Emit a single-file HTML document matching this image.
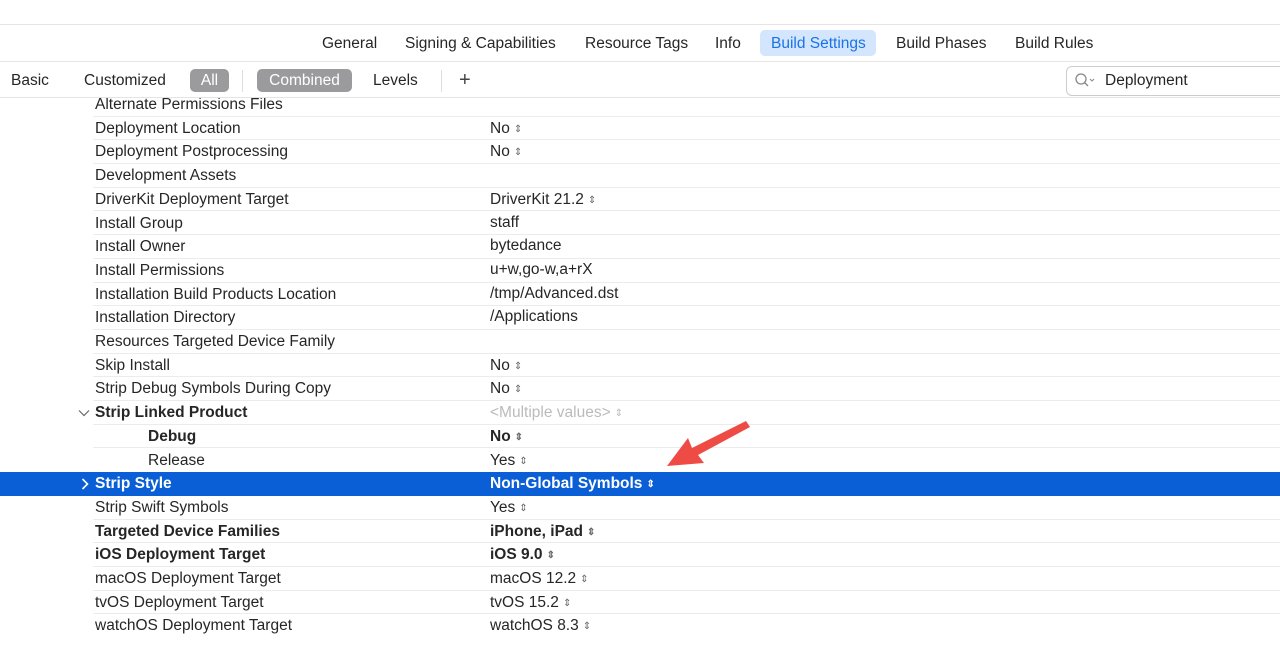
<!DOCTYPE html><html><head><style>
body{margin:0;width:1280px;height:655px;overflow:hidden;background:#fff;font-family:"Liberation Sans",sans-serif;font-size:15.5px;color:#262626;position:relative}
.a{position:absolute;white-space:nowrap}
.hl{position:absolute;left:0;width:1280px;height:1px;background:#e4e4e4}
.row{position:absolute;left:0;width:1280px;height:23.7px;line-height:23.7px}
.row .k{position:absolute;left:95px}
.row .v{position:absolute;left:490px}
.row .ln{position:absolute;left:93px;right:0;bottom:0;height:1px;background:#ececec}
b{font-weight:bold}
.c{font-size:10px;color:#666;margin-left:4px;position:relative;top:-1px}
.sel{background:#0a5fd6;color:#fff}
.sel .c{color:#fff}
</style></head><body>
<div class="hl" style="top:24px"></div>
<div class="hl" style="top:61px"></div>
<div class="a" style="left:322px;top:35px">General</div>
<div class="a" style="left:405px;top:35px">Signing &amp; Capabilities</div>
<div class="a" style="left:585px;top:35px">Resource Tags</div>
<div class="a" style="left:715px;top:35px">Info</div>
<div class="a" style="left:760px;top:30px;width:116px;height:26px;background:#d3e6fd;border-radius:5px"></div>
<div class="a" style="left:771px;top:35px;color:#1a73e8">Build Settings</div>
<div class="a" style="left:896px;top:35px">Build Phases</div>
<div class="a" style="left:1015px;top:35px">Build Rules</div>

<div class="a" style="left:11px;top:72px">Basic</div>
<div class="a" style="left:84px;top:72px">Customized</div>
<div class="a" style="left:190px;top:69px;width:39px;height:23px;background:#9b9b9d;border-radius:5px;color:#fff;text-align:center;line-height:23px">All</div>
<div class="a" style="left:242px;top:70px;width:1px;height:22px;background:#ddd"></div>
<div class="a" style="left:257px;top:69px;width:95px;height:23px;background:#9b9b9d;border-radius:5px;color:#fff;text-align:center;line-height:23px">Combined</div>
<div class="a" style="left:373px;top:72px">Levels</div>
<div class="a" style="left:441px;top:70px;width:1px;height:22px;background:#ddd"></div>
<div class="a" style="left:459px;top:69px;font-size:20px;color:#444">+</div>
<div class="a" style="left:1066px;top:66px;width:230px;height:28px;border:1px solid #ccc;border-radius:6px"></div>
<svg class="a" style="left:1074px;top:72px" width="22" height="16"><circle cx="7" cy="7" r="5" fill="none" stroke="#888" stroke-width="1.3"/><line x1="10.5" y1="10.5" x2="14" y2="14" stroke="#888" stroke-width="1.3"/><path d="M16 7l2 2 2-2" fill="none" stroke="#888"/></svg>
<div class="a" style="left:1105px;top:72px">Deployment</div>
<div class="hl" style="top:97px"></div>

<div style="position:absolute;top:98px;left:0;width:1280px;height:557px;overflow:hidden">
<div style="position:absolute;top:-5px;left:0">
<div class="row" style="top:0"><span class="k">Alternate Permissions Files</span><div class="ln"></div></div>
<div class="row" style="top:23.7px"><span class="k">Deployment Location</span><span class="v">No<span class="c">⇕</span></span><div class="ln"></div></div>
<div class="row" style="top:47.4px"><span class="k">Deployment Postprocessing</span><span class="v">No<span class="c">⇕</span></span><div class="ln"></div></div>
<div class="row" style="top:71.1px"><span class="k">Development Assets</span><div class="ln"></div></div>
<div class="row" style="top:94.8px"><span class="k">DriverKit Deployment Target</span><span class="v">DriverKit 21.2<span class="c">⇕</span></span><div class="ln"></div></div>
<div class="row" style="top:118.5px"><span class="k">Install Group</span><span class="v" style="top:-1px">staff</span><div class="ln"></div></div>
<div class="row" style="top:142.2px"><span class="k">Install Owner</span><span class="v" style="top:-1px">bytedance</span><div class="ln"></div></div>
<div class="row" style="top:165.9px"><span class="k">Install Permissions</span><span class="v" style="top:-1px">u+w,go-w,a+rX</span><div class="ln"></div></div>
<div class="row" style="top:189.6px"><span class="k">Installation Build Products Location</span><span class="v" style="top:-1px">/tmp/Advanced.dst</span><div class="ln"></div></div>
<div class="row" style="top:213.3px"><span class="k">Installation Directory</span><span class="v" style="top:-1px">/Applications</span><div class="ln"></div></div>
<div class="row" style="top:237px"><span class="k">Resources Targeted Device Family</span><div class="ln"></div></div>
<div class="row" style="top:260.7px"><span class="k">Skip Install</span><span class="v">No<span class="c">⇕</span></span><div class="ln"></div></div>
<div class="row" style="top:284.4px"><span class="k">Strip Debug Symbols During Copy</span><span class="v">No<span class="c">⇕</span></span><div class="ln"></div></div>
<div class="row" style="top:308.1px"><svg class="a" style="left:78px;top:8px" width="12" height="8"><path d="M1 1.5l5 5 5-5" fill="none" stroke="#666" stroke-width="1.2"/></svg><b class="k">Strip Linked Product</b><span class="v" style="color:#bbb">&lt;Multiple values&gt;<span class="c" style="color:#bbb">⇕</span></span><div class="ln"></div></div>
<div class="row" style="top:331.8px"><b class="k" style="left:148px">Debug</b><b class="v">No<span class="c">⇕</span></b><div class="ln"></div></div>
<div class="row" style="top:355.5px"><span class="k" style="left:148px">Release</span><span class="v">Yes<span class="c">⇕</span></span></div>
<div class="row sel" style="top:379.2px"><svg class="a" style="left:81px;top:6px" width="8" height="12"><path d="M1.5 1l5 5-5 5" fill="none" stroke="#fff" stroke-width="1.6"/></svg><b class="k">Strip Style</b><b class="v">Non-Global Symbols<span class="c">⇕</span></b></div>
<div class="row" style="top:402.9px"><span class="k">Strip Swift Symbols</span><span class="v">Yes<span class="c">⇕</span></span><div class="ln"></div></div>
<div class="row" style="top:426.6px"><b class="k">Targeted Device Families</b><b class="v">iPhone, iPad<span class="c">⇕</span></b><div class="ln"></div></div>
<div class="row" style="top:450.3px"><b class="k">iOS Deployment Target</b><b class="v">iOS 9.0<span class="c">⇕</span></b><div class="ln"></div></div>
<div class="row" style="top:474px"><span class="k">macOS Deployment Target</span><span class="v">macOS 12.2<span class="c">⇕</span></span><div class="ln"></div></div>
<div class="row" style="top:497.7px"><span class="k">tvOS Deployment Target</span><span class="v">tvOS 15.2<span class="c">⇕</span></span><div class="ln"></div></div>
<div class="row" style="top:521.4px"><span class="k">watchOS Deployment Target</span><span class="v">watchOS 8.3<span class="c">⇕</span></span></div>
</div></div>

<svg class="a" style="left:0;top:0" width="1280" height="655"><path d="M746 421 L750 427 L698 455 L704 463 L667 466 L688 438 L692 448 Z" fill="#ef4b45"/></svg>
</body></html>
